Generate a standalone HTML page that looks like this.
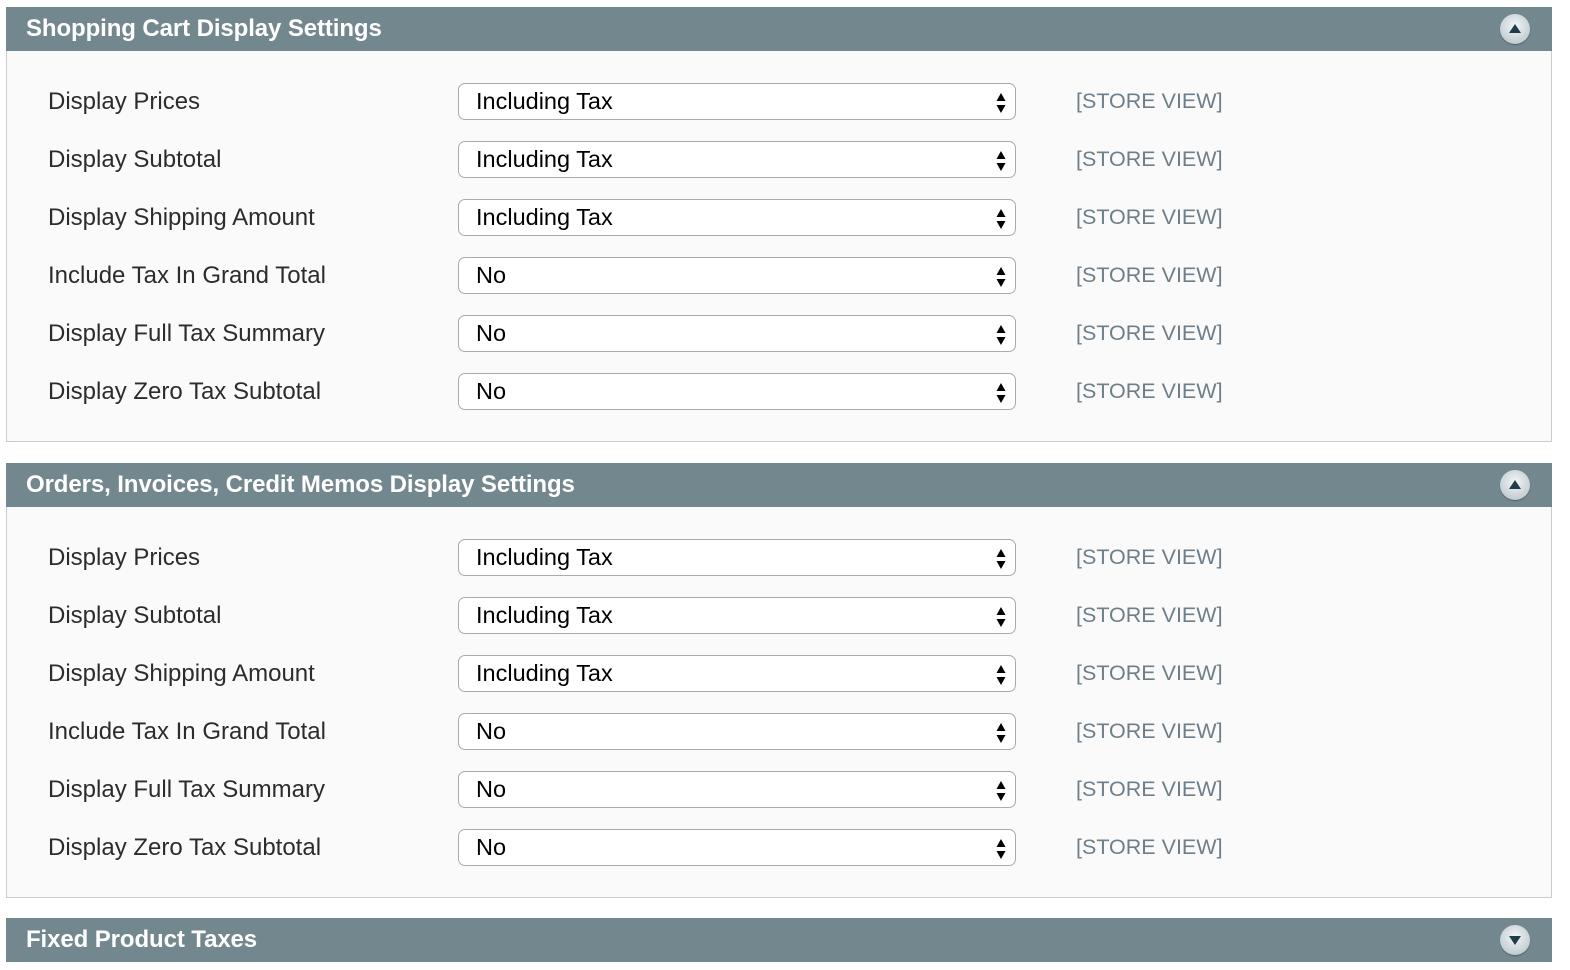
<!DOCTYPE html>
<html><head><style>
body{margin:0;background:#fff;font-family:"Liberation Sans",Arial,sans-serif;width:1570px;height:970px;overflow:hidden;position:relative}
.hd{position:absolute;left:6px;width:1546px;height:44px;background:#73878f;color:#fff;font-weight:bold;font-size:24px;line-height:44px;box-sizing:border-box;padding-left:20px;letter-spacing:-0.1px}
.ic{position:absolute;right:22px;top:7px;width:30px;height:30px;border-radius:50%;background:radial-gradient(circle at 50% 40%,#f4f6f7,#c4ced2 70%,#98a6ac);box-shadow:0 1px 1px rgba(0,0,0,.3)}
.ic svg{position:absolute;left:7px;top:8px}
.bd{position:absolute;left:6px;width:1546px;background:#fafafa;border:1px solid #ccc;border-top:none;box-sizing:border-box}
.lb{position:absolute;left:48px;font-size:24px;color:#2c2c2c;letter-spacing:0px}
.sel{position:absolute;left:458px;width:558px;height:37px;box-sizing:border-box;border:1px solid #aaa;border-radius:7px;background:#fff;font-size:23.5px;line-height:34px;padding-left:17px;color:#000}
.sel svg{position:absolute;right:9px;top:8px}
.sv{position:absolute;left:1076px;font-size:21.5px;color:#6e7f89}
</style></head><body>
<div class="hd" style="top:7px">Shopping Cart Display Settings<div class="ic"><svg width="16" height="14"><path d="M8 2L14 11H2Z" fill="#1f3c4a"/></svg></div></div>
<div class="bd" style="top:51px;height:391px"></div>
<div class="hd" style="top:463px">Orders, Invoices, Credit Memos Display Settings<div class="ic"><svg width="16" height="14"><path d="M8 2L14 11H2Z" fill="#1f3c4a"/></svg></div></div>
<div class="bd" style="top:507px;height:391px"></div>
<div class="hd" style="top:918px">Fixed Product Taxes<div class="ic"><svg width="16" height="14"><path d="M2 3H14L8 12Z" fill="#1f3c4a"/></svg></div></div>
<div id="rows"></div>
<script>
var L=["Display Prices","Display Subtotal","Display Shipping Amount","Include Tax In Grand Total","Display Full Tax Summary","Display Zero Tax Subtotal"];
var V=["Including Tax","Including Tax","Including Tax","No","No","No"];
var h="";
[83,539].forEach(function(b){for(var i=0;i<6;i++){var y=b+i*58;
h+='<div class="lb" style="top:'+(y+5)+'px">'+L[i]+'</div>';
h+='<div class="sel" style="top:'+y+'px">'+V[i]+'<svg width="10" height="22"><path d="M5 1L9.5 9H0.5Z M0.5 13H9.5L5 21Z" fill="#000"/></svg></div>';
h+='<div class="sv" style="top:'+(y+6)+'px">[STORE VIEW]</div>';}});
document.getElementById("rows").innerHTML=h;
</script>
</body></html>
